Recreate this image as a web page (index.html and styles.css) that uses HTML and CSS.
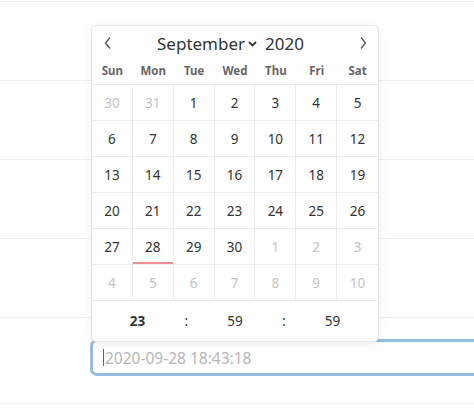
FILE: index.html
```html
<!DOCTYPE html>
<html>
<head>
<meta charset="utf-8">
<link rel="stylesheet" href="styles.css">
</head>
<body>
<div class="table">
  <div class="row"></div>
  <div class="row"></div>
  <div class="row"></div>
  <div class="row"></div>
  <div class="row last">
    <div class="field"><span class="caret"></span><span class="ph">2020-09-28 18:43:18</span></div>
  </div>
  <div class="cal">
    <div class="head">
      <svg class="nav" width="10" height="14" viewBox="0 0 10 14"><path d="M7 1.5 L2.5 7 L7 12.5" fill="none" stroke="#555" stroke-width="1.3"/></svg>
      <div class="title">
        <span class="month">September</span>
        <svg class="dd" width="9" height="6" viewBox="0 0 9 6"><path d="M1 1 L4.5 4.5 L8 1" fill="none" stroke="#333" stroke-width="1.8"/></svg>
        <span class="year">2020</span>
      </div>
      <svg class="nav" width="10" height="14" viewBox="0 0 10 14"><path d="M3 1.5 L7.5 7 L3 12.5" fill="none" stroke="#555" stroke-width="1.3"/></svg>
    </div>
    <div class="wk">
      <span>Sun</span><span>Mon</span><span>Tue</span><span>Wed</span><span>Thu</span><span>Fri</span><span>Sat</span>
    </div>
    <div class="days">
      <span class="o">30</span><span class="o">31</span><span>1</span><span>2</span><span>3</span><span>4</span><span>5</span>
      <span>6</span><span>7</span><span>8</span><span>9</span><span>10</span><span>11</span><span>12</span>
      <span>13</span><span>14</span><span>15</span><span>16</span><span>17</span><span>18</span><span>19</span>
      <span>20</span><span>21</span><span>22</span><span>23</span><span>24</span><span>25</span><span>26</span>
      <span>27</span><span class="today">28</span><span>29</span><span>30</span><span class="o">1</span><span class="o">2</span><span class="o">3</span>
      <span class="o">4</span><span class="o">5</span><span class="o">6</span><span class="o">7</span><span class="o">8</span><span class="o">9</span><span class="o">10</span>
    </div>
    <div class="time">
      <span class="b">23</span><span>:</span><span>59</span><span>:</span><span>59</span>
    </div>
  </div>
</div>
</body>
</html>
```
FILE: styles.css
```css
html, body {
  margin: 0;
  padding: 0;
  background: #fff;
  overflow: hidden;
}
body {
  font-family: "Noto Sans", "Lato", sans-serif;
  width: 474px;
  height: 408px;
}
.table {
  position: relative;
  margin-top: 1px;
  border-top: 1px solid #eeeeee;
}
.row {
  height: 78px;
  border-bottom: 1px solid #eeeeee;
}
.row.last {
  height: 86px;
  padding-top: 21px;
  padding-left: 90px;
  box-sizing: border-box;
}
.field {
  height: 37px;
  box-sizing: border-box;
  border: 3px solid #93bde2;
  border-right: none;
  border-radius: 7px 0 0 7px;
  display: flex;
  align-items: center;
  padding-left: 10px;
  font-size: 15.5px;
  color: #b5b5b5;
}
.caret {
  width: 1px;
  height: 17px;
  background: #666;
  margin-right: 1px;
}
.cal {
  position: absolute;
  left: 91px;
  top: 23px;
  width: 288px;
  height: 317px;
  box-sizing: border-box;
  background: #fff;
  border: 1px solid #e6e6e6;
  border-radius: 5px;
  box-shadow: 0 2px 8px rgba(0,0,0,0.08);
  display: flex;
  flex-direction: column;
}
.head {
  height: 34px;
  display: flex;
  align-items: center;
  justify-content: space-between;
  padding: 0 10px 0 11px;
}
.title {
  display: flex;
  align-items: center;
  font-size: 17px;
  color: #333;
  margin-right: 10px;
}
.dd {
  margin: 1px 8px 0 3px;
}
.wk {
  height: 24px;
  display: grid;
  grid-template-columns: repeat(7, 1fr);
  font-size: 11.5px;
  font-weight: 700;
  color: #666;
  text-align: center;
  line-height: 22px;
}
.days {
  display: grid;
  grid-template-columns: repeat(7, 1fr);
  grid-auto-rows: 36px;
}
.days span {
  border-top: 1px solid #ececec;
  border-right: 1px solid #ececec;
  display: flex;
  align-items: center;
  justify-content: center;
  font-size: 13.5px;
  color: #333;
}
.days span:nth-child(7n) {
  border-right: none;
}
.days span.o {
  color: #c4c4c4;
}
.days span.today {
  box-shadow: inset 0 -2px 0 #f08f93;
}
.time {
  flex: 1;
  border-top: 1px solid #ececec;
  display: grid;
  grid-template-columns: repeat(5, 1fr);
  padding: 0 21px 0 21px;
  align-items: center;
  text-align: center;
  font-size: 13.5px;
  color: #333;
}
.time .b {
  font-weight: 700;
}
```
